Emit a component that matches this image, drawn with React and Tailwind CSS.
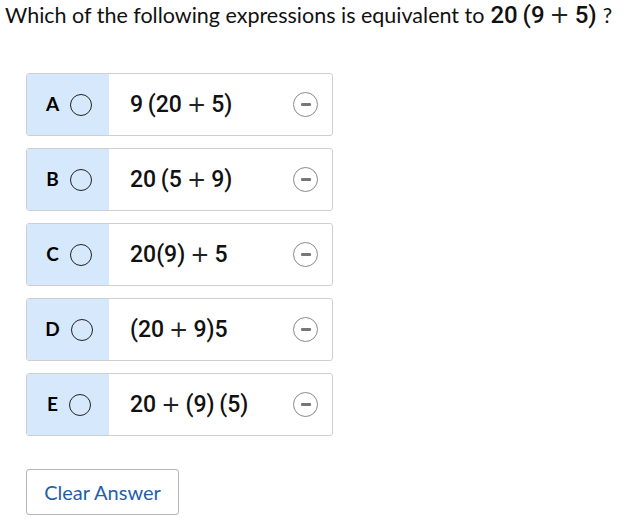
import React from 'react';

const options = [
  { letter: 'A', expr: ['9\u2009(20', '+', '5)'] },
  { letter: 'B', expr: ['20\u2009(5', '+', '9)'] },
  { letter: 'C', expr: ['20(9)', '+', '5'] },
  { letter: 'D', expr: ['(20', '+', '9)5'] },
  { letter: 'E', expr: ['20', '+', '(9)\u2009(5)'] },
];

// renders tokens, with a thin, wide plus sign like typeset math
const MathText = ({ parts, className = '' }) => (
  <span className={`font-['Roboto',sans-serif] font-medium text-[#111] whitespace-nowrap ${className}`}>
    {parts.map((p, i) =>
      p === '+' ? (
        <span key={i} className="mx-[5px] font-['DejaVu_Sans',sans-serif] font-normal text-[#222]">+</span>
      ) : (
        <span key={i}>{p}</span>
      )
    )}
  </span>
);

const OptionRow = ({ letter, expr }) => (
  <div className="flex h-[63px] w-[307px] rounded-[3px] border border-[#cfcfcf] bg-white overflow-hidden">
    <div className="flex w-[82px] items-center justify-center gap-[11px] bg-[#d5e8fc] pl-[2px]">
      <span className="font-['Lato',sans-serif] text-[19px] font-bold text-black">{letter}</span>
      <span className="block h-[22px] w-[22px] rounded-full border-[1.5px] border-[#222]" />
    </div>
    <div className="flex flex-1 items-center pl-[21px] pr-[14px]">
      <MathText parts={expr} className="flex-1 text-[23px]" />
      <span className="flex h-[25px] w-[25px] items-center justify-center rounded-full border border-[#8a8a8a]">
        <span className="block h-[3px] w-[10px] rounded-[1px] bg-[#777]" />
      </span>
    </div>
  </div>
);

export default function App() {
  return (
    <div className="h-[520px] w-[624px] bg-white pl-[5px]">
      <div className="flex items-baseline text-[#111] leading-[30px]">
        <span className="font-['Lato',sans-serif] text-[21.5px]">Which of the following expressions is equivalent to</span>
        <MathText parts={['20\u2009(9', '+', '5)']} className="ml-[6px] text-[24px]" />
        <span className="ml-[6px] font-['Lato',sans-serif] text-[21px]">?</span>
      </div>
      <div className="ml-[21px] mt-[43px] flex flex-col gap-[12px]">
        {options.map((o) => (
          <OptionRow key={o.letter} {...o} />
        ))}
      </div>
      <button className="ml-[21px] mt-[33px] h-[46px] w-[153px] rounded-[3px] border border-[#b5b5b5] bg-white font-['Lato',sans-serif] text-[20px] text-[#1f5fae]">
        Clear Answer
      </button>
    </div>
  );
}
